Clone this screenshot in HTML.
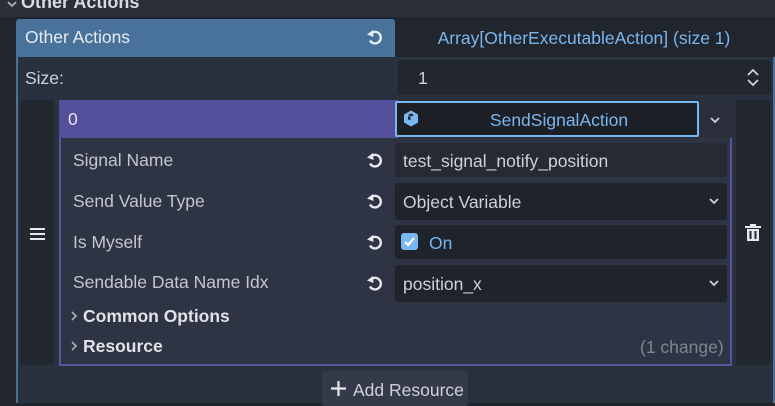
<!DOCTYPE html>
<html><head><meta charset="utf-8"><style>
*{margin:0;padding:0;box-sizing:border-box}
body{width:775px;height:403px;overflow:hidden;background:#21252d;font-family:"Liberation Sans",sans-serif;font-size:17.5px;color:#cdd1d8;position:relative}
.a{position:absolute}
.t{position:absolute;white-space:nowrap;line-height:20px}
.rs{position:absolute;width:18px;height:18px}
.fld{position:absolute;background:#1f232c;border-radius:3px}
.chev{position:absolute;width:12px;height:8px}
</style></head><body>
<div class="a" style="left:0;top:0;width:775px;height:17px;background:#2a2f39"></div>
<svg class="a" style="left:6px;top:0" width="12" height="10"><path d="M2 2 L6 6 L10 2" stroke="#aab0ba" stroke-width="1.8" fill="none"/></svg>
<div class="t" style="left:21px;top:-8px;font-weight:bold;font-size:18px;color:#d8dbe0">Other Actions</div>

<div class="a" style="left:16px;top:57px;width:759px;height:346px;background:#29313f;border-left:2px solid #4a7297;border-right:2px solid #4a7297"></div>
<div class="a" style="left:16px;top:19px;width:379px;height:38px;background:#48729a;border-radius:3px 3px 0 0"></div>
<div class="t" style="left:25px;top:27px;color:#e6ebf2">Other Actions</div>
<svg class="rs" style="left:366px;top:28px" viewBox="0 0 18 18"><path d="M5.5 5 A5.8 5.8 0 1 1 4 12.5" stroke="#e6ebf2" stroke-width="2.4" fill="none"/><path d="M1 6.5 L7 2 L7.5 9 Z" fill="#e6ebf2"/></svg>
<div class="a" style="left:396px;top:19px;width:379px;height:36px;background:#21252e;border-radius:3px 3px 0 0"></div>
<div class="t" style="left:396px;top:28px;width:376px;text-align:center;color:#7ab6ee">Array[OtherExecutableAction] (size 1)</div>

<div class="t" style="left:25px;top:68px">Size:</div>
<div class="fld" style="left:398px;top:60px;width:373px;height:35px;background:#22272f"></div>
<div class="t" style="left:418px;top:68px">1</div>
<svg class="a" style="left:746px;top:68px" width="14" height="20"><path d="M2 7 L7 2 L12 7 M2 12 L7 17 L12 12" stroke="#cdd1d8" stroke-width="1.8" fill="none"/></svg>

<div class="a" style="left:20px;top:100px;width:34px;height:265px;background:#232830;border-radius:3px"></div>
<div class="a" style="left:30px;top:228px;width:15px;height:2px;background:#e6e8ec"></div>
<div class="a" style="left:30px;top:233px;width:15px;height:2px;background:#e6e8ec"></div>
<div class="a" style="left:30px;top:238px;width:15px;height:2px;background:#e6e8ec"></div>

<div class="a" style="left:736px;top:100px;width:34px;height:265px;background:#232830;border-radius:3px"></div>
<svg class="a" style="left:744px;top:223px" width="18" height="20" viewBox="0 0 18 20"><rect x="1" y="3" width="16" height="2" fill="#e6e8ec"/><rect x="6" y="1" width="6" height="2" fill="#e6e8ec"/><rect x="3" y="6" width="12" height="12" fill="#e6e8ec"/><rect x="5.5" y="8" width="2" height="8" fill="#232830"/><rect x="10.5" y="8" width="2" height="8" fill="#232830"/></svg>

<div class="a" style="left:59px;top:137px;width:673px;height:229px;background:#2e3444;border:2px solid #5a549e;border-top:none"></div>
<div class="a" style="left:59px;top:100px;width:340px;height:38px;background:#544f9a"></div>
<div class="t" style="left:68px;top:109px;color:#e8e8f2">0</div>
<div class="a" style="left:398px;top:100px;width:334px;height:38px;background:#2a2f3b"></div>
<div class="a" style="left:395px;top:101px;width:304px;height:36px;background:#1c1f26;border:2px solid #78b7ef;border-radius:2px"></div>
<svg class="a" style="left:403px;top:110px" width="16" height="17" viewBox="0 0 16 17"><path d="M8 0.5 L15 4.5 L15 12.5 L8 16.5 L1 12.5 L1 4.5 Z" fill="#78b7ef"/><path d="M5 5 L8 3.5 L11 5 L8 6.5 Z M5 6 L7.5 7.3 L7.5 10.5 L5 9.2 Z" fill="#1c1f26"/></svg>
<div class="t" style="left:420px;top:110px;width:278px;text-align:center;color:#7ab6ee">SendSignalAction</div>
<svg class="chev" style="left:709px;top:116px"><path d="M2 2 L6 6 L10 2" stroke="#cdd1d8" stroke-width="1.8" fill="none"/></svg>

<div class="t" style="left:73px;top:150px;color:#c2c6cd">Signal Name</div>
<div class="t" style="left:73px;top:191px;color:#c2c6cd">Send Value Type</div>
<div class="t" style="left:73px;top:232px;color:#c2c6cd">Is Myself</div>
<div class="t" style="left:73px;top:272px;color:#c2c6cd">Sendable Data Name Idx</div>

<svg class="rs" style="left:366px;top:151px" viewBox="0 0 18 18"><path d="M5.5 5 A5.8 5.8 0 1 1 4 12.5" stroke="#e6e8ec" stroke-width="2.4" fill="none"/><path d="M1 6.5 L7 2 L7.5 9 Z" fill="#e6e8ec"/></svg>
<svg class="rs" style="left:366px;top:192px" viewBox="0 0 18 18"><path d="M5.5 5 A5.8 5.8 0 1 1 4 12.5" stroke="#e6e8ec" stroke-width="2.4" fill="none"/><path d="M1 6.5 L7 2 L7.5 9 Z" fill="#e6e8ec"/></svg>
<svg class="rs" style="left:366px;top:233px" viewBox="0 0 18 18"><path d="M5.5 5 A5.8 5.8 0 1 1 4 12.5" stroke="#e6e8ec" stroke-width="2.4" fill="none"/><path d="M1 6.5 L7 2 L7.5 9 Z" fill="#e6e8ec"/></svg>
<svg class="rs" style="left:366px;top:274px" viewBox="0 0 18 18"><path d="M5.5 5 A5.8 5.8 0 1 1 4 12.5" stroke="#e6e8ec" stroke-width="2.4" fill="none"/><path d="M1 6.5 L7 2 L7.5 9 Z" fill="#e6e8ec"/></svg>

<div class="fld" style="left:395px;top:143px;width:332px;height:34px;background:#252a35"></div>
<div class="t" style="left:403px;top:151px">test_signal_notify_position</div>

<div class="fld" style="left:395px;top:183px;width:332px;height:37px"></div>
<div class="t" style="left:403px;top:192px">Object Variable</div>
<svg class="chev" style="left:708px;top:197px"><path d="M2 2 L6 6 L10 2" stroke="#cdd1d8" stroke-width="1.8" fill="none"/></svg>

<div class="fld" style="left:395px;top:225px;width:332px;height:34px"></div>
<svg class="a" style="left:401px;top:233px" width="17" height="17"><rect x="0" y="0" width="17" height="17" rx="3" fill="#78b7ef"/><path d="M4 9 L7 12 L13 5" stroke="#fff" stroke-width="2.2" fill="none"/></svg>
<div class="t" style="left:429px;top:233px;color:#7ab6ee">On</div>

<div class="fld" style="left:395px;top:265px;width:332px;height:37px"></div>
<div class="t" style="left:403px;top:274px">position_x</div>
<svg class="chev" style="left:708px;top:279px"><path d="M2 2 L6 6 L10 2" stroke="#cdd1d8" stroke-width="1.8" fill="none"/></svg>

<svg class="a" style="left:70px;top:310px" width="8" height="12"><path d="M2 2 L6 6 L2 10" stroke="#aab0ba" stroke-width="1.6" fill="none"/></svg>
<div class="t" style="left:83px;top:306px;font-weight:bold;color:#dfe2e7">Common Options</div>
<svg class="a" style="left:70px;top:340px" width="8" height="12"><path d="M2 2 L6 6 L2 10" stroke="#aab0ba" stroke-width="1.6" fill="none"/></svg>
<div class="t" style="left:83px;top:336px;font-weight:bold;color:#dfe2e7">Resource</div>
<div class="t" style="left:640px;top:337px;color:#7f8590">(1 change)</div>

<div class="a" style="left:322px;top:371px;width:146px;height:35px;background:#343a47;border-radius:3px"></div>
<svg class="a" style="left:330px;top:380px" width="17" height="17"><path d="M8.5 1 V16 M1 8.5 H16" stroke="#e6e8ec" stroke-width="2.2"/></svg>
<div class="t" style="left:353px;top:380px">Add Resource</div>
</body></html>
